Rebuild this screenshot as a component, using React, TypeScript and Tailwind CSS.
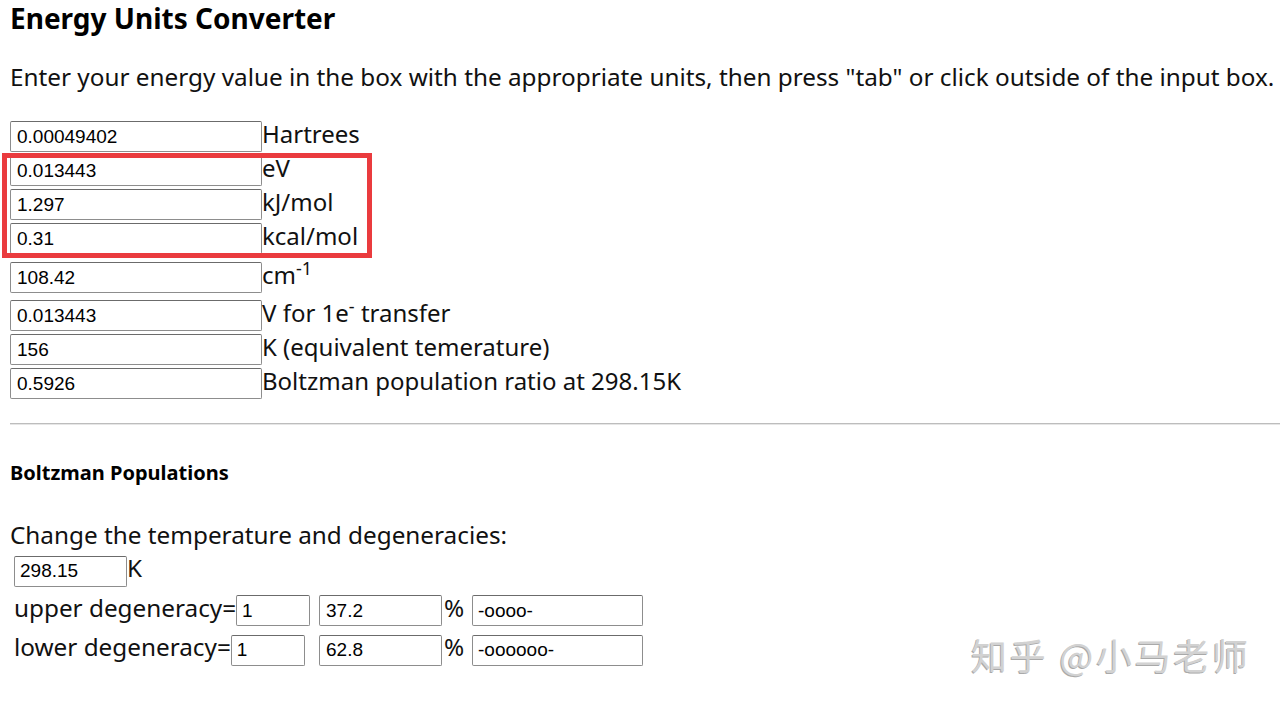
import React from 'react'

type EnergyRow = {
  value: string
  label: React.ReactNode
  pad?: string
}

const energyRows: EnergyRow[] = [
  { value: '0.00049402', label: 'Hartrees' },
  { value: '0.013443', label: 'eV' },
  { value: '1.297', label: 'kJ/mol' },
  { value: '0.31', label: 'kcal/mol' },
  {
    value: '108.42',
    label: (
      <>
        cm<sup>-1</sup>
      </>
    ),
    pad: 'pt-[5px]',
  },
  {
    value: '0.013443',
    label: (
      <>
        V for 1e<sup>-</sup> transfer
      </>
    ),
    pad: 'pt-[4px]',
  },
  { value: '156', label: 'K (equivalent temerature)' },
  { value: '0.5926', label: 'Boltzman population ratio at 298.15K' },
]

const inputClass =
  'h-[31px] rounded-[2px] border border-[#8d8d8d] border-t-[#6b6b6b] bg-white text-[19px] text-black outline-none [font-family:"Liberation_Sans",Arial,sans-serif]'

const App: React.FC = () => {
  return (
    <div className="relative min-h-[707px] overflow-hidden bg-white text-[#111] [font-family:'Noto_Sans',sans-serif]">
      <h3 className="pl-[10px] pt-[1px] text-[28px] font-bold leading-[34px] text-black">
        Energy Units Converter
      </h3>

      <p className="mt-[25px] whitespace-nowrap pl-[10px] text-[24.3px] leading-[34px]">
        Enter your energy value in the box with the appropriate units, then press "tab" or click outside of the input box.
      </p>

      <div className="mt-[27px] flex flex-col gap-[3px] pl-[10px]">
        {energyRows.map((row, i) => (
          <div key={i} className={`flex items-baseline ${row.pad ?? ''}`}>
            <input
              readOnly
              defaultValue={row.value}
              className={`${inputClass} w-[252px] pl-[6px]`}
            />
            <span className="text-[24px] leading-[20px]">{row.label}</span>
          </div>
        ))}
      </div>

      <div className="ml-[10px] mt-[24px] border-t border-b border-t-[#bdbdbd] border-b-[#e6e6e6]" />

      <h5 className="mt-[35px] pl-[10px] text-[20px] font-bold leading-[26px] text-black">
        Boltzman Populations
      </h5>

      <p className="mt-[32px] pl-[10px] text-[24.3px] leading-[34px]">
        Change the temperature and degeneracies:
      </p>

      <div className="grid grid-cols-[305px_153px_171px] items-baseline gap-y-[5px] pl-[14px] text-[24.3px] leading-[32px]">
        <div className="col-span-3 flex items-baseline">
          <input readOnly defaultValue="298.15" className={`${inputClass} w-[113px] pl-[5px]`} />
          <span>K</span>
        </div>

        <div className="flex items-baseline">
          <span>upper degeneracy=</span>
          <input readOnly defaultValue="1" className={`${inputClass} h-[30px] w-[74px] pl-[5px]`} />
        </div>
        <div className="flex items-baseline">
          <input readOnly defaultValue="37.2" className={`${inputClass} w-[123px] pl-[6px]`} />
          <span className="ml-[2px]">%</span>
        </div>
        <input readOnly defaultValue="-oooo-" className={`${inputClass} w-[171px] pl-[5px]`} />

        <div className="flex items-baseline">
          <span>lower degeneracy=</span>
          <input readOnly defaultValue="1" className={`${inputClass} w-[74px] pl-[5px]`} />
        </div>
        <div className="flex items-baseline">
          <input readOnly defaultValue="62.8" className={`${inputClass} w-[123px] pl-[6px]`} />
          <span className="ml-[2px]">%</span>
        </div>
        <input readOnly defaultValue="-oooooo-" className={`${inputClass} w-[171px] pl-[5px]`} />
      </div>

      {/* annotation box drawn over the eV / kJ / kcal rows */}
      <div className="pointer-events-none absolute left-[2px] top-[153px] h-[105px] w-[370px] border-[5px] border-[#ea3b3e]" />

      {/* watermark */}
      <div className="pointer-events-none absolute left-[971px] top-[630px] whitespace-nowrap text-[36px] leading-[48px] tracking-[2.7px] text-[#d2d2d2] [font-family:'Noto_Sans_CJK_SC',sans-serif] [text-shadow:-1px_1px_0_#a9a9a9]">
        知乎 @小马老师
      </div>
    </div>
  )
}

export default App
